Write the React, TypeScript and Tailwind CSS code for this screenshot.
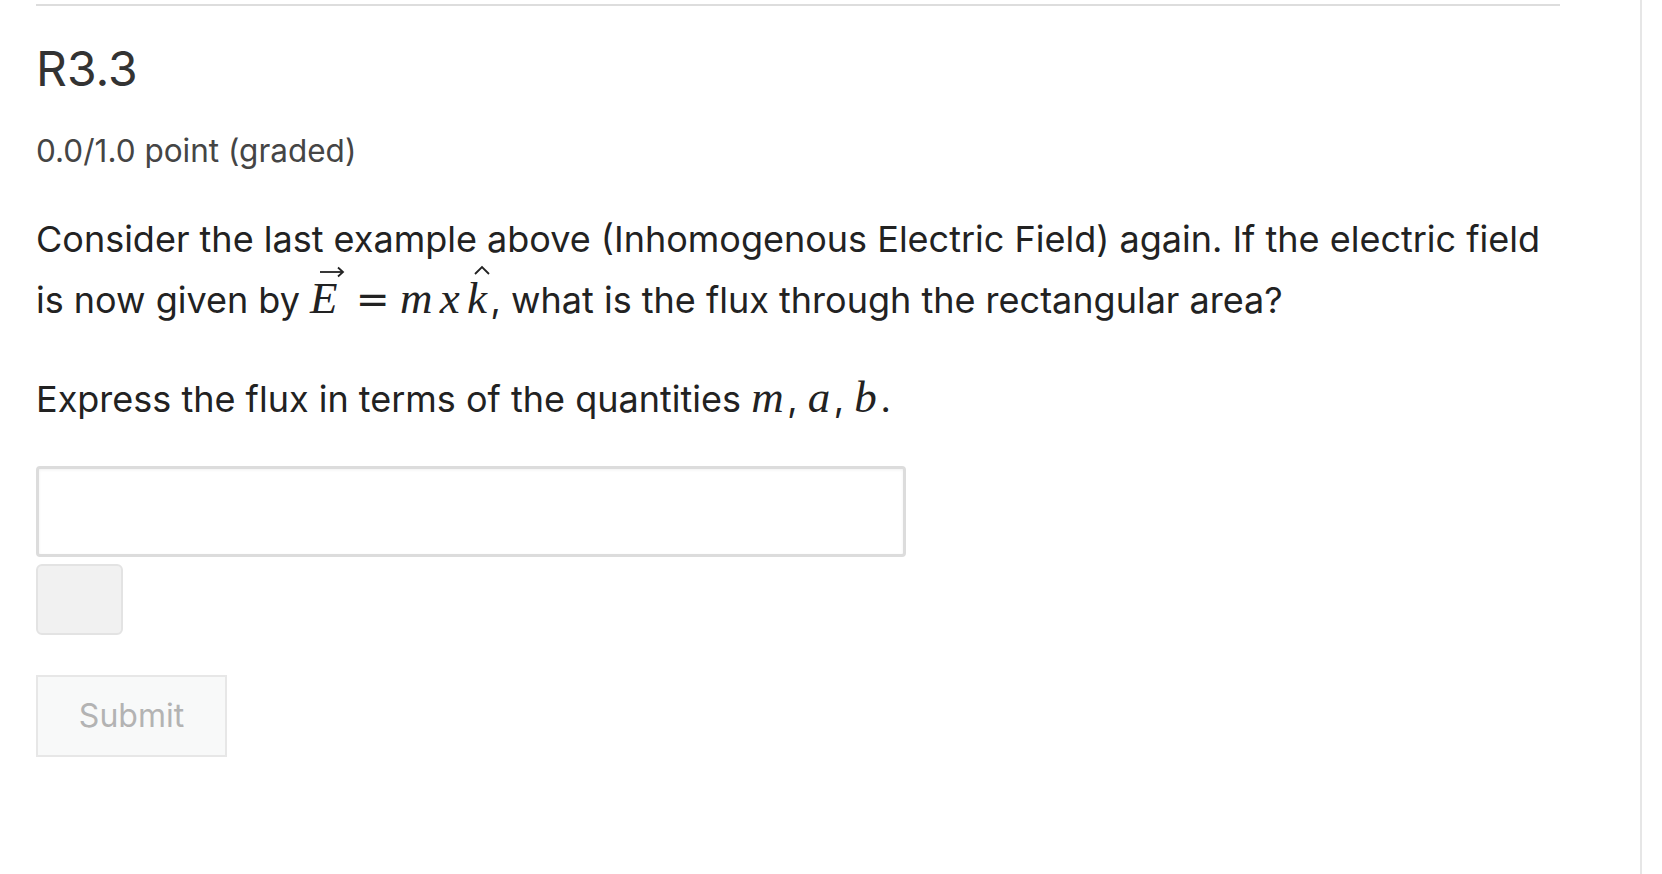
export default function App() {
    const inter = "font-['Inter','Noto_Sans',sans-serif]";
    const math = "font-['Liberation_Serif','DejaVu_Serif',serif] italic text-[1.25em] leading-none tracking-[0.08em]";

    return (
        <div className={`flex min-h-[874px] bg-white ${inter}`}>
            {/* Main column */}
            <div className="w-[1640px] shrink-0 pl-[36px] pr-[80px]">
                <div className="mt-[4px] border-t-2 border-[#dddddd]">
                    <h2 className="mt-[34px] text-[48px] leading-[58px] font-normal text-[#333333]">
                        R3.3
                    </h2>
                    <div className="mt-[33px] text-[31.5px] leading-[40px] text-[#454545]">
                        0.0/1.0 point (graded)
                    </div>

                    <p className="mt-[38px] text-[36px] leading-[61px] text-[#222222]">
                        Consider the last example above (Inhomogenous Electric Field) again. If the electric field
                        is now given by{" "}
                        <span className={math}>
                            <span className="relative inline-block mr-[4px]">
                                E
                                <svg
                                    className="absolute left-[8px] -top-[12px] w-[28px] h-[14px]"
                                    viewBox="0 0 28 14"
                                    fill="none"
                                    stroke="#222222"
                                    strokeWidth={1.8}
                                >
                                    <path d="M2 8h23" />
                                    <path d="M20 3.5l5 4.5-5 4.5" />
                                </svg>
                            </span>
                            <span className="not-italic tracking-normal font-['DejaVu_Serif',serif] text-[0.9em] mx-[0.26em]">=</span>
                            <span className="tracking-[0.16em]">mx</span>
                            <span className="relative inline-block">
                                k
                                <svg
                                    className="absolute left-[5px] -top-[12px] w-[20px] h-[12px]"
                                    viewBox="0 0 20 12"
                                    fill="none"
                                    stroke="#222222"
                                    strokeWidth={1.8}
                                >
                                    <path d="M3 10l7-7 7 7" />
                                </svg>
                            </span>
                        </span>
                        , what is the flux through the rectangular area?
                    </p>

                    <p className="mt-[38px] text-[36px] leading-[61px] text-[#222222]">
                        Express the flux in terms of the quantities{" "}
                        <span className={math}>m</span>,{" "}
                        <span className={math}>a</span>,{" "}
                        <span className={math}>b</span>.
                    </p>

                    {/* Answer input */}
                    <div className="mt-[36px] w-[870px] h-[91px] rounded-[4px] border-[3px] border-[#dcdcdc] bg-white shadow-[inset_0_1px_3px_rgba(0,0,0,0.06)]" />

                    {/* Preview box */}
                    <div className="mt-[7px] w-[87px] h-[71px] rounded-[6px] border-2 border-[#e3e3e3] bg-[#f1f1f1]" />

                    <button
                        type="button"
                        className="mt-[40px] flex items-center justify-center w-[191px] h-[82px] border-2 border-[#e7e7e7] bg-[#f8f9f9] text-[32px] text-[#b3b3b3]"
                    >
                        Submit
                    </button>
                </div>
            </div>

            {/* Right rule */}
            <div className="w-[2px] shrink-0 bg-[#e6e6e6]" />
            <div className="flex-1" />
        </div>
    );
}
